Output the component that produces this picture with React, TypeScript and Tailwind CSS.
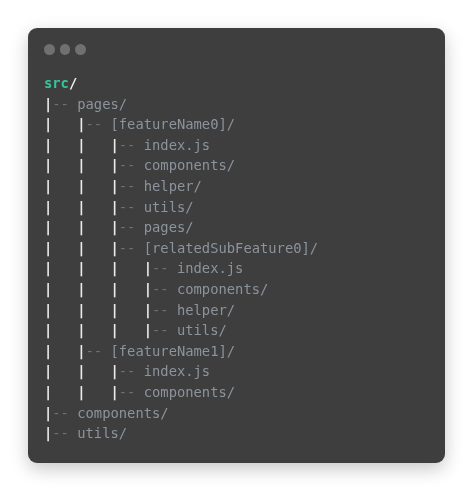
import React from "react";

type Seg = { t: string; c: "bar" | "dash" | "name" | "src" | "slash" };

const lines: string[] = [
  "src/",
  "|-- pages/",
  "|   |-- [featureName0]/",
  "|   |   |-- index.js",
  "|   |   |-- components/",
  "|   |   |-- helper/",
  "|   |   |-- utils/",
  "|   |   |-- pages/",
  "|   |   |-- [relatedSubFeature0]/",
  "|   |   |   |-- index.js",
  "|   |   |   |-- components/",
  "|   |   |   |-- helper/",
  "|   |   |   |-- utils/",
  "|   |-- [featureName1]/",
  "|   |   |-- index.js",
  "|   |   |-- components/",
  "|-- components/",
  "|-- utils/",
];

function parse(line: string): Seg[] {
  if (line === "src/") return [{ t: "src", c: "src" }, { t: "/", c: "slash" }];
  const segs: Seg[] = [];
  let i = 0;
  while (i < line.length) {
    const ch = line[i];
    if (ch === "|") {
      segs.push({ t: "|", c: "bar" });
      i++;
    } else if (ch === "-" && line[i + 1] === "-") {
      segs.push({ t: "--", c: "dash" });
      i += 2;
    } else if (ch === " ") {
      let j = i;
      while (j < line.length && line[j] === " ") j++;
      segs.push({ t: line.slice(i, j), c: "dash" });
      i = j;
    } else {
      segs.push({ t: line.slice(i), c: "name" });
      break;
    }
  }
  return segs;
}

const cls: Record<Seg["c"], string> = {
  bar: "text-[#ececec] font-bold",
  dash: "text-[#6f7378]",
  name: "text-[#8d959e]",
  src: "text-[#35c9a0] font-semibold",
  slash: "text-[#f2f2f2] font-semibold",
};

export default function App() {
  return (
    <div className="w-[474px] h-[492px] bg-white p-[28px] pr-[29px]">
      <div className="w-[417px] h-[435px] rounded-[9px] bg-[#3e3e3e] shadow-[0_6px_18px_rgba(0,0,0,0.22)] px-[16px] pt-[16px]">
        <div className="flex gap-[5px]">
          <div className="w-[10.5px] h-[10.5px] rounded-full bg-[#707070]" />
          <div className="w-[10.5px] h-[10.5px] rounded-full bg-[#707070]" />
          <div className="w-[10.5px] h-[10.5px] rounded-full bg-[#707070]" />
        </div>
        <pre
          className="mt-[18px] text-[13.8px] leading-[20.6px] antialiased opacity-[0.995] will-change-transform"
          style={{ fontFamily: '"DejaVu Sans Mono", "Liberation Mono", monospace' }}
        >
          {lines.map((l, idx) => (
            <div key={idx}>
              {parse(l).map((s, k) => (
                <span key={k} className={cls[s.c]}>
                  {s.t}
                </span>
              ))}
            </div>
          ))}
        </pre>
      </div>
    </div>
  );
}
